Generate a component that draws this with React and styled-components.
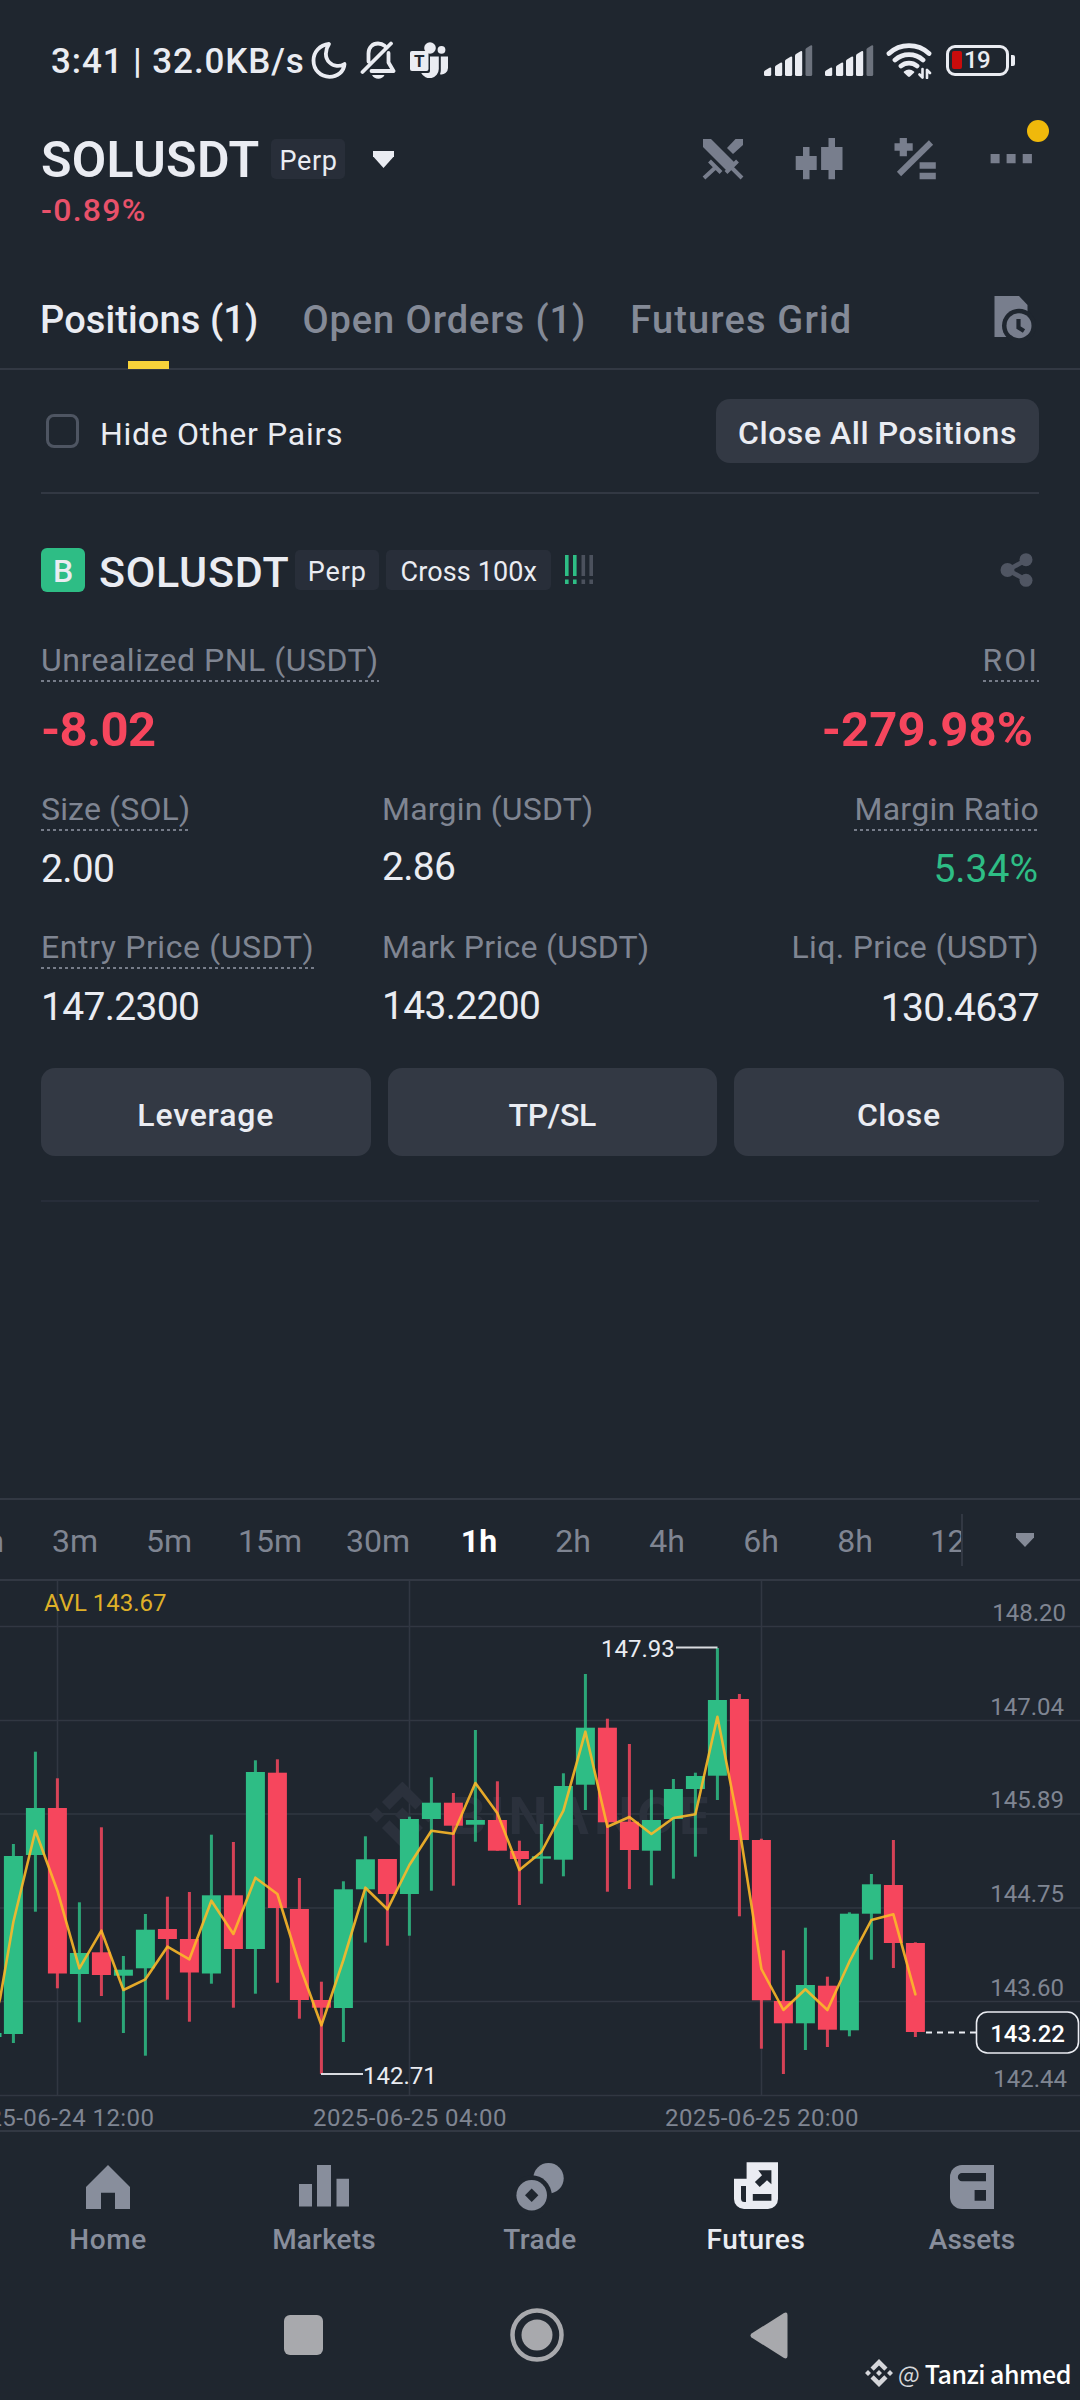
import React from 'react';
import styled, { createGlobalStyle } from 'styled-components';
import { SiBinance } from 'react-icons/si';

const c = {
  bg: '#1f262f',
  text: '#eaecf2',
  muted: '#848a97',
  label: '#7f8592',
  icon: '#787e8d',
  nav: '#888e9c',
  line: '#323843',
  faint: '#272d39',
  chip: '#282e39',
  button: '#333944',
  green: '#2ebd85',
  red: '#f6465d',
  yellow: '#f0b90b',
};

const GlobalStyle = createGlobalStyle`
  * { box-sizing: border-box; }
  body { margin: 0; background: ${c.bg}; }
  button { border: 0; padding: 0; font-family: inherit; }
  svg { display: block; flex: none; }
`;

const Screen = styled.main`
  width: 1080px;
  height: 2400px;
  position: relative;
  overflow: hidden;
  display: flex;
  flex-direction: column;
  background: ${c.bg};
  color: ${c.text};
  font-family: Roboto, 'Liberation Sans', sans-serif;
  white-space: nowrap;
`;

/* ---------- status bar ---------- */
const StatusBar = styled.div`
  height: 120px;
  flex: none;
  display: flex;
  align-items: center;
  justify-content: space-between;
  padding: 0 65px 0 51px;
`;
const StatusGroup = styled.div`
  display: flex;
  align-items: center;
  gap: ${(p) => p.$gap}px;
`;
const Clock = styled.span`
  font-size: 35px;
  font-weight: 500;
  letter-spacing: 0.9px;
  line-height: 40px;
  padding-top: 4px;
  margin-right: -7px;
`;
const BatteryWrap = styled.div`
  display: flex;
  align-items: center;
  gap: 2px;
  margin-left: 2px;
`;
const BatteryBody = styled.div`
  width: 63px;
  height: 31px;
  border: 3px solid ${c.text};
  border-radius: 9px;
  display: flex;
  align-items: center;
  padding-left: 3px;
  font-size: 24px;
  font-weight: 500;
  letter-spacing: -0.6px;
  line-height: 26px;
`;
const BatteryLevel = styled.i`
  width: 10px;
  height: 18px;
  border-radius: 2px;
  background: #c90c0c;
  margin-right: 2px;
`;
const BatteryTip = styled.i`
  width: 4px;
  height: 11px;
  border-radius: 0 2px 2px 0;
  background: ${c.text};
`;

/* ---------- header ---------- */
const Header = styled.header`
  height: 150px;
  flex: none;
  padding: 0 45px 0 41px;
`;
const HeaderRow = styled.div`
  height: 78px;
  display: flex;
  align-items: center;
`;
const Symbol = styled.h1`
  margin: 0;
  font-size: ${(p) => p.$size}px;
  font-weight: ${(p) => p.$weight};
  letter-spacing: ${(p) => p.$ls}px;
  line-height: 60px;
  padding-top: ${(p) => p.$drop}px;
`;
const Chip = styled.span`
  width: ${(p) => p.$width}px;
  height: 40px;
  border-radius: 5px;
  background: ${c.chip};
  display: flex;
  justify-content: center;
  font-size: 27px;
  letter-spacing: ${(p) => p.$ls || 0.6}px;
  line-height: 44px;
  margin-left: ${(p) => p.$gap}px;
`;
const Tools = styled.div`
  margin-left: auto;
  display: flex;
  gap: 48px;
`;
const MoreButton = styled.div`
  position: relative;
`;
const Dot = styled.i`
  position: absolute;
  left: 40px;
  top: -15px;
  width: 22px;
  height: 22px;
  border-radius: 50%;
  background: ${c.yellow};
`;
const Change = styled.div`
  font-size: 32px;
  font-weight: 500;
  line-height: 32px;
  letter-spacing: 1.3px;
  margin-top: -4px;
  color: #e8516a;
`;
const CaretSlot = styled.div`
  margin-left: 28px;
`;

/* ---------- tabs ---------- */
const Tabs = styled.nav`
  height: 100px;
  flex: none;
  display: flex;
  padding: 0 43.5px 0 40px;
  border-bottom: 2px solid ${c.line};
`;
const Tab = styled.div`
  position: relative;
  font-size: 38px;
  font-weight: 500;
  line-height: 100px;
  letter-spacing: ${(p) => p.$ls}px;
  margin-right: 44px;
  color: ${(p) => (p.$active ? c.text : c.muted)};
  &::after {
    content: '';
    display: ${(p) => (p.$active ? 'block' : 'none')};
    position: absolute;
    left: 50%;
    bottom: -1px;
    width: 41px;
    height: 8px;
    margin-left: -21px;
    background: #f8d33a;
  }
`;
const TabTool = styled.div`
  margin-left: auto;
  padding-top: 23px;
`;

/* ---------- filter row ---------- */
const FilterRow = styled.div`
  height: 124px;
  flex: none;
  margin: 0 41px;
  display: flex;
  align-items: center;
  border-bottom: 2px solid ${c.line};
`;
const Checkbox = styled.i`
  width: 33px;
  height: 34px;
  margin-left: 5px;
  border: 3px solid #4e5562;
  border-radius: 8px;
`;
const FilterLabel = styled.span`
  font-size: 32px;
  letter-spacing: 0.7px;
  margin-left: 21px;
  padding-top: 5px;
`;
const CloseAll = styled.button`
  margin-left: auto;
  width: 323px;
  height: 64px;
  border-radius: 14px;
  background: ${c.button};
  color: ${c.text};
  font-size: 32px;
  font-weight: 500;
  letter-spacing: 0.55px;
  line-height: 62px;
  padding-top: 3px;
`;

/* ---------- position card ---------- */
const Position = styled.section`
  flex: none;
  height: 708px;
  margin: 0 41px;
  border-bottom: 2px solid ${c.faint};
`;
const PositionHead = styled.div`
  height: 152px;
  display: flex;
  align-items: center;
`;
const Side = styled.span`
  width: 44px;
  height: 44px;
  border-radius: 6px;
  background: ${c.green};
  font-size: 32px;
  font-weight: 500;
  line-height: 46px;
  text-align: center;
  margin-right: 14px;
`;
const RiskSlot = styled.div`
  margin-left: 14px;
`;
const ShareSlot = styled.div`
  margin-left: auto;
  margin-right: 6px;
`;
const PnlRow = styled.div`
  display: flex;
  justify-content: space-between;
  margin-top: -6px;
`;
const StatRow = styled.div`
  display: grid;
  grid-template-columns: 341px auto 1fr;
  margin-top: ${(p) => p.$top}px;
`;
const Stat = styled.div`
  display: flex;
  flex-direction: column;
  align-items: ${(p) => (p.$right ? 'flex-end' : 'flex-start')};
`;
const StatLabel = styled.span`
  font-size: 32px;
  line-height: 40px;
  letter-spacing: ${(p) => p.$ls}px;
  color: ${c.label};
  height: 42px;
  background: ${(p) =>
    p.$dotted
      ? `repeating-linear-gradient(90deg, #767c89 0 3px, transparent 3px 6px) 0 100% / 100% 2px no-repeat`
      : 'none'};
`;
const StatValue = styled.span`
  font-size: 39px;
  line-height: 50px;
  letter-spacing: ${(p) => p.$ls}px;
  margin-top: ${(p) => p.$top || 13}px;
  margin-right: ${(p) => (p.$green ? 1 : 0)}px;
  color: ${(p) => (p.$green ? c.green : c.text)};
`;
const PnlValue = styled.span`
  font-size: 49px;
  font-weight: 700;
  line-height: 60px;
  letter-spacing: ${(p) => p.$ls}px;
  margin-top: 18px;
  margin-right: ${(p) => (p.$inset ? 6 : 0)}px;
  color: ${c.red};
`;
const Actions = styled.div`
  display: grid;
  grid-template-columns: repeat(3, 329.5px);
  gap: 17px;
  margin-top: 35px;
`;
const ActionButton = styled.button`
  height: 88px;
  border-radius: 14px;
  background: ${c.button};
  color: ${c.text};
  font-size: 32px;
  font-weight: 500;
  letter-spacing: ${(p) => p.$ls}px;
  padding-top: 5px;
`;

/* ---------- chart ---------- */
const IntervalBar = styled.div`
  flex: none;
  height: 83px;
  margin-top: 296px;
  display: flex;
  align-items: center;
  border-top: 2px solid ${c.line};
  border-bottom: 2px solid ${c.line};
`;
const IntervalStrip = styled.div`
  width: 961px;
  overflow: hidden;
  display: flex;
`;
const Interval = styled.span`
  flex: none;
  width: ${(p) => (p.$wide ? 108 : 94)}px;
  text-align: center;
  font-size: 32px;
  line-height: 50px;
  padding-top: 3px;
  font-weight: ${(p) => (p.$active ? 700 : 400)};
  color: ${(p) => (p.$active ? '#fff' : c.label)};
  &:first-child {
    margin-left: -66px;
  }
  &:last-child {
    letter-spacing: -0.5px;
  }
`;
const IntervalMore = styled.div`
  height: 52px;
  flex: 1;
  display: flex;
  align-items: center;
  padding-left: 53px;
  border-left: 2px solid ${c.line};
`;
const ChartPane = styled.div`
  flex: none;
  height: 551px;
  border-bottom: 2px solid ${c.line};
  overflow: hidden;
  text {
    font-family: Roboto, 'Liberation Sans', sans-serif;
    font-size: 24px;
  }
`;
const BrandText = styled.text`
  && {
    font-family: Inter, sans-serif;
    font-size: 51px;
    font-weight: 700;
  }
`;

/* ---------- bottom bars ---------- */
const BottomNav = styled.nav`
  flex: none;
  height: 143px;
  display: grid;
  grid-template-columns: repeat(5, 1fr);
`;
const NavItem = styled.div`
  display: flex;
  flex-direction: column;
  align-items: center;
  padding-top: 25px;
  font-size: 28px;
  font-weight: 500;
  line-height: 30px;
  letter-spacing: ${(p) => p.$ls}px;
  color: ${(p) => (p.$active ? c.text : c.nav)};
  svg {
    margin-bottom: 8px;
  }
`;
const SystemBar = styled.div`
  flex: none;
  height: 120px;
  display: flex;
  align-items: center;
  gap: 186.5px;
  padding-left: 284px;
  color: #a8a9ad;
`;
const Credit = styled.div`
  position: absolute;
  right: 9px;
  top: 2357px;
  height: 32px;
  display: flex;
  align-items: center;
  gap: 5px;
  font: 500 25px/32px 'Noto Sans CJK SC', 'Noto Sans', sans-serif;
  letter-spacing: -0.5px;
  color: #fff;
`;
const At = styled.span`
  font-size: 23px;
  font-weight: 400;
  letter-spacing: 0;
  color: #d5d6da;
`;

/* ---------- icons ---------- */
const Signal = () => (
  <svg width="49" height="31" viewBox="0 0 49 31" fill={c.text}>
    {[[0, 8.5], [11, 13.5], [21, 19.5], [31, 25]].map(([x, h]) => (
      <path key={x} d={`M${x} ${31 - h + 4.5}q0-1 1-1.6l4.5-2.6q1.7-.8 1.7.8V29.5q0 1.5-1.5 1.5H${x + 1.5}q-1.5 0-1.5-1.5z`} />
    ))}
    <path fill="#6c727d" d="M41.5 4.5q0-1 1-1.6L46.5.6q1.7-.8 1.7.8V29.5q0 1.5-1.5 1.5H43q-1.5 0-1.5-1.5z" />
  </svg>
);
const Wifi = () => (
  <svg width="46" height="38" viewBox="0 0 46 38" fill="none" stroke={c.text} strokeWidth="4.8" strokeLinecap="round">
    <path d="M3 12.5A29.5 29.5 0 0 1 43 12.5M9 19A21 21 0 0 1 37 19M15 25A12.5 12.5 0 0 1 31 25" />
    <path fill={c.text} stroke="none" d="M18 30.500a8 8 0 0 1 10 0q.7.6 0 1.3L24 35.6q-1 .9-2 0l-4-3.8q-.7-.7 0-1.3z" />
    <path d="M32 27.5h14v10H32z" fill={c.bg} stroke="none" />
    <path d="M36.500 28v8M33.500 33.500l3 3M41 37v-8M41 29l3 3" strokeWidth="2.600" />
  </svg>
);
const MoonIcon = () => (
  <svg width="36" height="37" viewBox="0 0 36 37" fill="none" stroke={c.text} strokeWidth="3.8" strokeLinejoin="round">
    <path d="M18 2C8.5 3 2.500 10 2.500 18.500C2.500 28 9.500 34.800 18.500 34.800C26.500 34.800 33 29.500 33.500 22C29 25 22.500 24.500 18.500 20.500C13.500 15.500 14 8 18 2Z" />
  </svg>
);
const BellOffIcon = () => (
  <svg width="37" height="38" viewBox="0 0 37 38" fill="none" stroke={c.text} strokeWidth="3.8" strokeLinecap="round" strokeLinejoin="round">
    <path d="M8.500 20.500V12.500C8.500 6.500 12.500 2.500 18 2.500c2.600 0 4.800.7 6.600 2.200M28.500 12V21.500L33.500 30H11.500M2.500 31L31 2.500" />
    <path fill={c.text} stroke="none" d="M12 34h12.500q-2 3.800-6.200 3.800T12 34z" />
  </svg>
);
const TeamsLetter = styled.text`
  font-size: 17px;
  font-weight: 700;
`;
const TeamsIcon = () => (
  <svg width="38" height="38" viewBox="0 0 38 38" fill={c.text}>
    <circle cx="20" cy="7" r="5.8" />
    <circle cx="31.5" cy="8.8" r="3.9" />
    <path d="M20 15.500h8.800V28a9.300 9.300 0 0 1-17.600 4H18q2 0 2-2z" />
    <path d="M30.800 15.500h7.200V27a6.500 6.500 0 0 1-8 6.300q.8-2 .8-4z" />
    <rect y="10" width="18.500" height="20" rx="2" />
    <TeamsLetter x="9.2" y="26" textAnchor="middle" fill={c.bg}>T</TeamsLetter>
  </svg>
);
const Caret = ({ w, h, color }) => (
  <svg width={w} height={h} viewBox="0 0 21 16" preserveAspectRatio="none" fill={color}>
    <path d="M0 0H21V5L10.5 16L0 5Z" />
  </svg>
);
const Swords = () => (
  <svg width="48" height="48" viewBox="0 0 48 48" fill={c.icon} stroke="none">
    <path d="M4 4H12L36.5 28.5L28.5 36.5L4 12Z" />
    <path d="M44 4H36.5L28 13L34 19L44 10Z" />
    <path fill="none" stroke={c.icon} strokeWidth="4" d="M38.5 26L27 37.5M32 32L43 43M10.5 26L22 37.5M17 32L5 43" />
  </svg>
);
const CandlesIcon = () => (
  <svg width="48" height="48" viewBox="0 0 48 48" fill={c.icon}>
    <path d="M8 12h6.5v9h7.2v14h-7.2v9.3H8V35H.7V21H8zM33.5 3H40v9h7.5v23H40v9.3h-6.5V35h-7.4V12h7.4z" />
  </svg>
);
const PlusSlash = () => (
  <svg width="48" height="48" viewBox="0 0 48 48" fill={c.icon}>
    <path d="M8.7 3h7.2v5.3h5.8v7.4h-5.8v5.6H8.7v-5.6H3.5V8.3h5.2zM28.6 27.3h16.2v6.4H28.6zM28.6 37.7h16.2v6.6H28.6z" />
    <path stroke={c.icon} strokeWidth="6" d="M40 7.5L8 39" />
  </svg>
);
const MoreIcon = () => (
  <svg width="48" height="48" viewBox="0 0 48 48" fill={c.icon}>
    <path d="M3.6 19h9v9.3h-9zM19.6 19h9v9.3h-9zM35.7 19h9.2v9.3h-9.2z" />
  </svg>
);
const OrderHistory = () => (
  <svg width="48" height="48" viewBox="0 0 48 48" fill={c.icon}>
    <path d="M5.5 3H30L38.5 12V44H5.5Z" />
    <circle cx="30" cy="32.7" r="17" fill={c.bg} />
    <circle cx="30" cy="32.7" r="12.5" />
    <path d="M29.5 26V34.500L35 38" fill="none" stroke={c.bg} strokeWidth="4.2" />
  </svg>
);
const Risk = () => (
  <svg width="28" height="30" viewBox="0 0 28 30">
    {[0, 8, 16.5, 24.4].map((x, i) => (
      <path key={x} fill={i < 2 ? c.green : '#4b515d'} d={`M${x} 0h3.6v21h-3.6zM${x} 24.5h3.6v4.5h-3.6z`} />
    ))}
  </svg>
);
const Share = () => (
  <svg width="33" height="34" viewBox="0 0 33 34" fill="#4f5562">
    <path fill="none" stroke="#4f5562" strokeWidth="4.5" d="M26 7L8 17L26 27" />
    <circle cx="7.5" cy="17" r="7" />
    <circle cx="26" cy="6.7" r="6.5" />
    <circle cx="26" cy="27.3" r="6.5" />
  </svg>
);
const navIcon = { width: 60, height: 60, viewBox: '0 0 60 60', fill: 'currentColor' };
const HomeIcon = () => (
  <svg {...navIcon}><path d="M30 8L52 30V52H37V35.7H23V52H8V30Z" /></svg>
);
const MarketsIcon = () => (
  <svg {...navIcon}><path d="M5 27h13v22.5H5zM23 8h14v41.5H23zM42.5 21.7H55v27.8H42.5z" /></svg>
);
const TradeIcon = () => (
  <svg {...navIcon}>
    <circle cx="38.5" cy="21.3" r="15.2" />
    <circle cx="21.7" cy="38.3" r="20" fill={c.bg} />
    <circle cx="21.7" cy="38.3" r="15.3" />
    <path fill={c.bg} d="M21.7 31.5L28.4 38.3L21.7 45L15 38.3Z" />
  </svg>
);
const FuturesIcon = () => (
  <svg {...navIcon}>
    <path d="M20.6 5.3H52V42a10 10 0 0 1-10 10H18A10 10 0 0 1 8 42V21.7H20.6Z" />
    <path fill={c.bg} d="M15 29H20V45H18.5A3.5 3.5 0 0 1 15 41.5ZM26.8 37H45.4V43.7H26.8ZM32.3 13.3H45.4V27.3L41 23.3L33.7 30L28.9 25L36 18.3Z" />
  </svg>
);
const AssetsIcon = () => (
  <svg {...navIcon}>
    <path d="M20 8H52V52H20A12 12 0 0 1 8 40V20A12 12 0 0 1 20 8Z" />
    <path fill={c.bg} d="M20 16H44V24.3H20A4.1 4.1 0 0 1 20 16ZM32.6 33H44V43.7H32.6Z" />
  </svg>
);
const CreditLogo = () => (
  <svg width="28" height="28" viewBox="0 0 28 28" fill="#d5d6da">
    <path d="M14 0L22.5 8.5L19.3 11.7L14 6.4L8.7 11.7L5.5 8.5ZM14 28L22.5 19.5L19.3 16.3L14 21.6L8.7 16.3L5.5 19.5ZM3 11L6 14L3 17L0 14ZM25 11L28 14L25 17L22 14ZM14 11L17 14L14 17L11 14Z" />
  </svg>
);

/* ---------- chart data: up/down, high, body top, body bottom, low ---------- */
const candles = [
  [1, 1844, 1856, 2034, 2043], [1, 1751.7, 1808, 1855, 1911.7], [0, 1778.3, 1808, 1973.5, 1988.3],
  [1, 1902.3, 1953, 1974, 2022.3], [0, 1827.3, 1952.3, 1975, 1996], [1, 1956, 1969.7, 1975.7, 2033],
  [1, 1914, 1929.7, 1968.3, 2055.7], [0, 1896.7, 1929, 1939, 1999.7], [0, 1892, 1939, 1972.5, 2021.7],
  [1, 1834.7, 1895.3, 1973.5, 1983.7], [0, 1842, 1895.3, 1949, 2007.7], [1, 1760.3, 1772, 1949, 1993.7],
  [0, 1759.3, 1772.7, 1908, 1982.7], [0, 1878, 1909, 2000, 2018.7], [0, 1981.7, 2000, 2007.7, 2074],
  [1, 1881.3, 1889.3, 2008, 2042], [1, 1836.3, 1859.3, 1889.3, 1942.5], [0, 1859, 1859, 1894, 1945.7],
  [1, 1816.7, 1819, 1894, 1935.7], [1, 1777.3, 1802.7, 1819, 1890.7], [0, 1793, 1802.7, 1825.7, 1885.7],
  [1, 1730, 1820, 1824.7, 1841.7], [0, 1781.3, 1820, 1850.7, 1850.7], [0, 1840.7, 1851, 1859, 1905],
  [1, 1824, 1856.3, 1858.7, 1883.7], [1, 1773.3, 1786, 1859.7, 1876.3], [1, 1674, 1727.7, 1784.7, 1810],
  [0, 1718.7, 1727.7, 1822.3, 1891.7], [0, 1744, 1821.7, 1850, 1889], [1, 1789.7, 1820, 1850.7, 1885.3],
  [1, 1779, 1789, 1819, 1878.7], [1, 1772.7, 1776, 1789, 1856.7], [1, 1648, 1700, 1775.7, 1800],
  [0, 1694, 1699, 1840, 1916.3], [0, 1838.7, 1840, 2000.3, 2048.7], [0, 1950.3, 2001, 2023.3, 2074],
  [1, 1927.7, 1985, 2023.3, 2050], [0, 1976.7, 1985.7, 2029.7, 2047], [1, 1912.3, 1913.7, 2030.3, 2036.3],
  [1, 1874, 1884.3, 1913.7, 1959.7], [0, 1840, 1885, 1943, 1968], [0, 1942.3, 1943, 2032, 2037],
];
const average = [
  1921.7, 1830.7, 1890.7, 1968.3, 1930.7, 1990, 1979.3, 1946.7, 1959.3, 1900.7, 1934, 1877.7, 1894, 1965,
  2025.3, 1960, 1887.7, 1909.3, 1865, 1830.7, 1833.7, 1783, 1813.3, 1870, 1852, 1810.7, 1731.7, 1826.7,
  1817, 1834, 1818, 1814.3, 1716.7, 1828.3, 1969, 2010, 1989.3, 2010, 1961.7, 1920, 1914.3, 1994.3,
];
const xAt = (i) => 13.4 + i * 22;
const gridY = [1626.5, 1720.5, 1814, 1908, 2001.5, 2095.5];
const prices = [
  ['148.20', 1066, 1621], ['147.04', 1064, 1715], ['145.89', 1064, 1808],
  ['144.75', 1064, 1902], ['143.60', 1064, 1996], ['142.44', 1067, 2087],
];

const Chart = () => (
  <svg width="1080" height="549" viewBox="0 1581 1080 549">
    <g stroke="#313742" strokeWidth="1.6">
      {gridY.map((y) => <path key={y} d={`M0 ${y}H1080`} />)}
      {[57.5, 409.5, 761.5].map((x) => <path key={x} d={`M${x} 1580V2095`} />)}
    </g>
    <g fill="#2b313c" color="#2b313c">
      <SiBinance size={67} x="369" y="1781.5" />
      <BrandText x="452" y="1834" textLength="258">BINANCE</BrandText>
    </g>
    {candles.map(([up, high, top, bottom, low], i) => (
      <g key={i} fill={up ? c.green : c.red}>
        <rect x={xAt(i) - 1.5} y={high} width="3" height={low - high} opacity="0.85" />
        <rect x={xAt(i) - 9.5} y={top} width="19" height={bottom - top} />
      </g>
    ))}
    <path
      d={`M-2 2006L0 1999L${average.map((y, i) => `${xAt(i)} ${y}`).join('L')}`}
      fill="none" stroke="#fbb829" strokeOpacity="0.9" strokeWidth="2.6" strokeLinejoin="round" strokeLinecap="round"
    />
    <rect x="0" y="2033" width="1.5" height="4" fill={c.green} />
    <path d="M676 1647.5H717.5M321 2074H363" stroke="#d9dbe0" strokeWidth="1.8" />
    <g fill={c.text}>
      <text x="601" y="1657">147.93</text>
      <text x="363" y="2084">142.71</text>
    </g>
    <text x="44" y="1611" fill="#deb028">AVL 143.67</text>
    <g fill={c.label} textAnchor="end">
      {prices.map(([label, x, y]) => <text key={label} x={x} y={y}>{label}</text>)}
    </g>
    <path d="M926 2032.5H976" stroke={c.text} strokeWidth="1.8" strokeDasharray="6 5" />
    <rect x="976.5" y="2012" width="102" height="41" rx="11" fill={c.bg} stroke={c.text} strokeWidth="1.6" />
    <text x="1065" y="2042" textAnchor="end" fill="#fff" fontWeight="500">143.22</text>
    <g fill={c.label} textAnchor="middle" letterSpacing="0.44">
      <text x="57.5" y="2126">2025-06-24 12:00</text>
      <text x="410" y="2126">2025-06-25 04:00</text>
      <text x="762" y="2126">2025-06-25 20:00</text>
    </g>
  </svg>
);

const intervals = ['1m', '3m', '5m', '15m', '30m', '1h', '2h', '4h', '6h', '8h', '12h'];
const navItems = [
  ['Home', HomeIcon, 0.6], ['Markets', MarketsIcon, 0.15], ['Trade', TradeIcon, 0.4],
  ['Futures', FuturesIcon, 0.6], ['Assets', AssetsIcon, 0.05],
];

export default function App() {
  return (
    <Screen>
      <GlobalStyle />
      <StatusBar>
        <StatusGroup $gap={13}>
          <Clock>3:41 | 32.0KB/s</Clock>
          <MoonIcon />
          <BellOffIcon />
          <TeamsIcon />
        </StatusGroup>
        <StatusGroup $gap={12}>
          <Signal />
          <Signal />
          <Wifi />
          <BatteryWrap>
            <BatteryBody><BatteryLevel />19</BatteryBody>
            <BatteryTip />
          </BatteryWrap>
        </StatusGroup>
      </StatusBar>

      <Header>
        <HeaderRow>
          <Symbol $size={50} $weight={600} $drop={2} $ls={0.3}>SOLUSDT</Symbol>
          <Chip $width={74} $gap={12}>Perp</Chip>
          <CaretSlot><Caret w={21} h={17} color={c.text} /></CaretSlot>
          <Tools>
            <Swords />
            <CandlesIcon />
            <PlusSlash />
            <MoreButton><MoreIcon /><Dot /></MoreButton>
          </Tools>
        </HeaderRow>
        <Change>-0.89%</Change>
      </Header>

      <Tabs>
        <Tab $active $ls={0.12}>Positions (1)</Tab>
        <Tab $ls={0.92}>Open Orders (1)</Tab>
        <Tab $ls={1.15}>Futures Grid</Tab>
        <TabTool><OrderHistory /></TabTool>
      </Tabs>

      <FilterRow>
        <Checkbox />
        <FilterLabel>Hide Other Pairs</FilterLabel>
        <CloseAll>Close All Positions</CloseAll>
      </FilterRow>

      <Position>
        <PositionHead>
          <Side>B</Side>
          <Symbol as="h2" $size={43} $weight={500} $drop={4} $ls={0.7}>SOLUSDT</Symbol>
          <Chip $width={84} $gap={6} $ls={0.9}>Perp</Chip>
          <Chip $width={165} $gap={7} $ls={0.12}>Cross 100x</Chip>
          <RiskSlot><Risk /></RiskSlot>
          <ShareSlot><Share /></ShareSlot>
        </PositionHead>
        <PnlRow>
          <Stat>
            <StatLabel $dotted $ls={0.5}>Unrealized PNL (USDT)</StatLabel>
            <PnlValue $ls={-0.7}>-8.02</PnlValue>
          </Stat>
          <Stat $right>
            <StatLabel $dotted $ls={2}>ROI</StatLabel>
            <PnlValue $inset $ls={0.13}>-279.98%</PnlValue>
          </Stat>
        </PnlRow>
        <StatRow $top={29}>
          <Stat>
            <StatLabel $dotted $ls={0.16}>Size (SOL)</StatLabel>
            <StatValue $ls={-0.7}>2.00</StatValue>
          </Stat>
          <Stat>
            <StatLabel $ls={0.2}>Margin (USDT)</StatLabel>
            <StatValue $top={11} $ls={-0.7}>2.86</StatValue>
          </Stat>
          <Stat $right>
            <StatLabel $dotted $ls={0.31}>Margin Ratio</StatLabel>
            <StatValue $green $ls={0}>5.34%</StatValue>
          </Stat>
        </StatRow>
        <StatRow $top={33}>
          <Stat>
            <StatLabel $dotted $ls={0.6}>Entry Price (USDT)</StatLabel>
            <StatValue $ls={-0.68}>147.2300</StatValue>
          </Stat>
          <Stat>
            <StatLabel $ls={0.3}>Mark Price (USDT)</StatLabel>
            <StatValue $top={12} $ls={-0.68}>143.2200</StatValue>
          </Stat>
          <Stat $right>
            <StatLabel $ls={0.35}>Liq. Price (USDT)</StatLabel>
            <StatValue $top={14} $ls={-0.68}>130.4637</StatValue>
          </Stat>
        </StatRow>
        <Actions>
          <ActionButton $ls={0.83}>Leverage</ActionButton>
          <ActionButton $ls={-0.3}>TP/SL</ActionButton>
          <ActionButton $ls={0.58}>Close</ActionButton>
        </Actions>
      </Position>

      <IntervalBar>
        <IntervalStrip>
          {intervals.map((name) => (
            <Interval key={name} $wide={name.length > 2} $active={name === '1h'}>{name}</Interval>
          ))}
        </IntervalStrip>
        <IntervalMore><Caret w={18} h={14} color={c.muted} /></IntervalMore>
      </IntervalBar>
      <ChartPane><Chart /></ChartPane>

      <BottomNav>
        {navItems.map(([name, Icon, ls]) => (
          <NavItem key={name} $active={name === 'Futures'} $ls={ls}>
            <Icon />
            {name}
          </NavItem>
        ))}
      </BottomNav>
      <SystemBar>
        <svg width="39" height="40"><rect width="39" height="40" rx="6" fill="currentColor" /></svg>
        <svg width="54" height="54" viewBox="0 0 54 54">
          <circle cx="27" cy="27" r="24.5" fill="none" stroke="currentColor" strokeWidth="4.5" />
          <circle cx="27" cy="27" r="15.5" fill="currentColor" />
        </svg>
        <svg width="38" height="47" viewBox="0 0 38 47">
          <path d="M1.5 21.5L34 1Q37.5-.5 37.5 3V44Q37.5 47.5 34 46L1.500 25.500Q-.5 23.500 1.500 21.500Z" fill="currentColor" />
        </svg>
      </SystemBar>
      <Credit><CreditLogo /><At>@</At>Tanzi ahmed</Credit>
    </Screen>
  );
}
